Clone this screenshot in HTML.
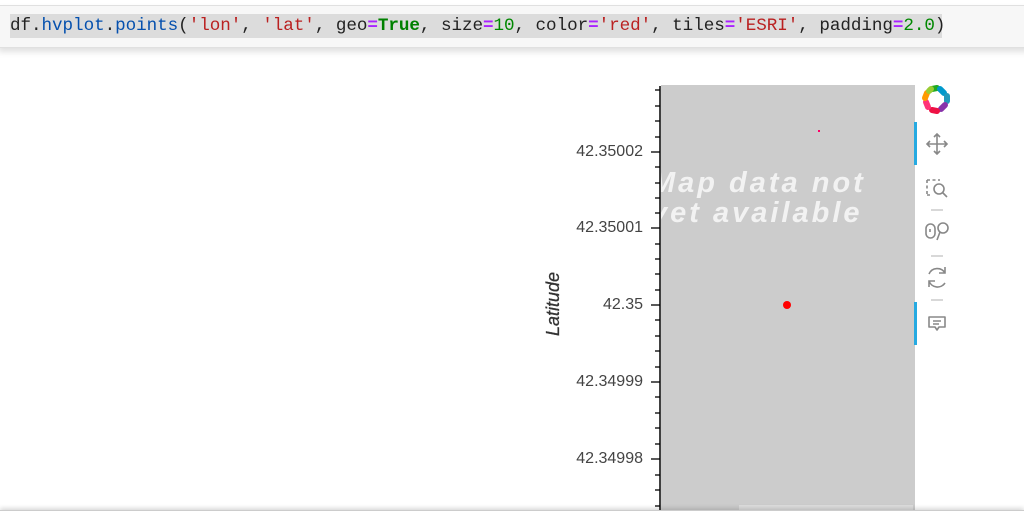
<!DOCTYPE html>
<html><head><meta charset="utf-8"><style>
body{margin:0;width:1024px;height:519px;background:#fff;position:relative;overflow:hidden;font-family:"Liberation Sans",sans-serif}
.cell{position:absolute;left:-2px;top:5px;width:1030px;height:41px;border:1px solid #e0e0e0;background:#f7f7f7;box-shadow:0 4px 6px rgba(0,0,0,.12)}
.code{position:absolute;left:10px;top:14px;width:932px;height:24px;background:#dcdcdc;font-family:"Liberation Mono",monospace;font-size:17.6px;line-height:24px;color:#222;white-space:pre;letter-spacing:-0.05px}
.s{color:#ba2121}.k{color:#008000;font-weight:bold}.o{color:#aa22ff;font-weight:bold}.n{color:#080}.f{color:#0550ae}
.lab{position:absolute;font-size:16px;color:#444;text-align:right;width:110px;left:533px}
</style></head><body>
<div class="cell"></div>
<div class="code">df.<span class="f">hvplot</span>.<span class="f">points</span>(<span class="s">'lon'</span>, <span class="s">'lat'</span>, geo<span class="o">=</span><span class="k">True</span>, size<span class="o">=</span><span class="n">10</span>, color<span class="o">=</span><span class="s">'red'</span>, tiles<span class="o">=</span><span class="s">'ESRI'</span>, padding<span class="o">=</span><span class="n">2.0</span>)</div>
<div style="position:absolute;left:661px;top:85px;width:254px;height:427px;background:#cccccc;overflow:hidden">
<div style="position:absolute;left:-10px;top:83px;font:italic bold 29px 'Liberation Sans',sans-serif;color:#f2f2f2;letter-spacing:3px;line-height:30px">Map data not<br>yet available</div>
<div style="position:absolute;left:122px;top:216px;width:8px;height:8px;border-radius:50%;background:#f00"></div>
<div style="position:absolute;left:157px;top:45px;width:2px;height:2px;background:#f06"></div>
<div style="position:absolute;left:78px;top:420px;width:174px;height:10px;background:#ddd"></div>
</div>
<svg style="position:absolute;left:640px;top:80px" width="25" height="440">
<line x1="20" y1="6" x2="20" y2="440" stroke="#000" stroke-width="1.5"/>
<g stroke="#000" stroke-width="1.3">
<line x1="11" y1="72" x2="20" y2="72"/><line x1="11" y1="148" x2="20" y2="148"/><line x1="11" y1="225" x2="20" y2="225"/><line x1="11" y1="302" x2="20" y2="302"/><line x1="11" y1="379" x2="20" y2="379"/>
<line x1="15" y1="10" x2="20" y2="10"/><line x1="15" y1="26" x2="20" y2="26"/><line x1="15" y1="41" x2="20" y2="41"/><line x1="15" y1="57" x2="20" y2="57"/>
<line x1="15" y1="87" x2="20" y2="87"/><line x1="15" y1="103" x2="20" y2="103"/><line x1="15" y1="118" x2="20" y2="118"/><line x1="15" y1="133" x2="20" y2="133"/>
<line x1="15" y1="164" x2="20" y2="164"/><line x1="15" y1="179" x2="20" y2="179"/><line x1="15" y1="194" x2="20" y2="194"/><line x1="15" y1="210" x2="20" y2="210"/>
<line x1="15" y1="240" x2="20" y2="240"/><line x1="15" y1="256" x2="20" y2="256"/><line x1="15" y1="271" x2="20" y2="271"/><line x1="15" y1="287" x2="20" y2="287"/>
<line x1="15" y1="317" x2="20" y2="317"/><line x1="15" y1="333" x2="20" y2="333"/><line x1="15" y1="348" x2="20" y2="348"/><line x1="15" y1="364" x2="20" y2="364"/>
<line x1="15" y1="395" x2="20" y2="395"/><line x1="15" y1="410" x2="20" y2="410"/><line x1="15" y1="426" x2="20" y2="426"/></g></svg>
<div class="lab" style="top:143px">42.35002</div>
<div class="lab" style="top:219px">42.35001</div>
<div class="lab" style="top:296px">42.35</div>
<div class="lab" style="top:373px">42.34999</div>
<div class="lab" style="top:450px">42.34998</div>
<div style="position:absolute;left:513px;top:294px;width:80px;transform:rotate(-90deg);font:italic 18px 'Liberation Sans',sans-serif;color:#333;text-align:center;transform-origin:40px 10px;-webkit-text-stroke:0.3px #333">Latitude</div>
<div style="position:absolute;left:914px;top:122px;width:3px;height:43px;background:#26aae1"></div>
<div style="position:absolute;left:914px;top:302px;width:3px;height:43px;background:#26aae1"></div>
<svg style="position:absolute;left:920px;top:84px" width="34" height="260" fill="none" stroke="#888" stroke-width="1.6">
<g stroke-width="6" stroke-linecap="round">
<path d="M12 5 L17 4" stroke="#2a2"/><path d="M20 5 L24 9" stroke="#09c"/><path d="M27 12 L27 17" stroke="#29b"/><path d="M25 21 L21 25" stroke="#83a"/><path d="M17 27 L12 26" stroke="#e14"/><path d="M8 23 L6 18" stroke="#f37"/><path d="M5 14 L7 9" stroke="#f90"/><path d="M9 7 L11 5" stroke="#9c3"/></g>
<path d="M17 50v20M7 60h20M14 53l3-3 3 3M14 67l3 3 3-3M10 57l-3 3 3 3M24 57l3 3-3 3"/>
<path d="M7 96h13M7 96v15M7 111h4" stroke-dasharray="3 2.5"/><circle cx="19" cy="105" r="5"/><path d="M23 109l4 4"/>
<path d="M11 126h12M11 172h12M11 216h12" stroke="#ccc"/>
<rect x="6" y="140" width="9" height="14" rx="4.5"/><path d="M10 145v3"/><circle cx="23" cy="144" r="5"/><path d="M20 148l-3 8"/>
<path d="M25 189a9 9 0 0 0-16 1M9 197a9 9 0 0 0 16 2M25 183v6h-6M9 203v-6h6"/>
<path d="M9 233h16v10h-6l-2 3-2-3H9z M13 237h8M13 240h6" stroke-linejoin="round"/>
</svg>
<div style="position:absolute;left:0;top:510px;width:1024px;height:9px;background:#fff;border-top:1px solid #ccc;box-shadow:0 -2px 4px rgba(0,0,0,.15)"></div>
</body></html>
